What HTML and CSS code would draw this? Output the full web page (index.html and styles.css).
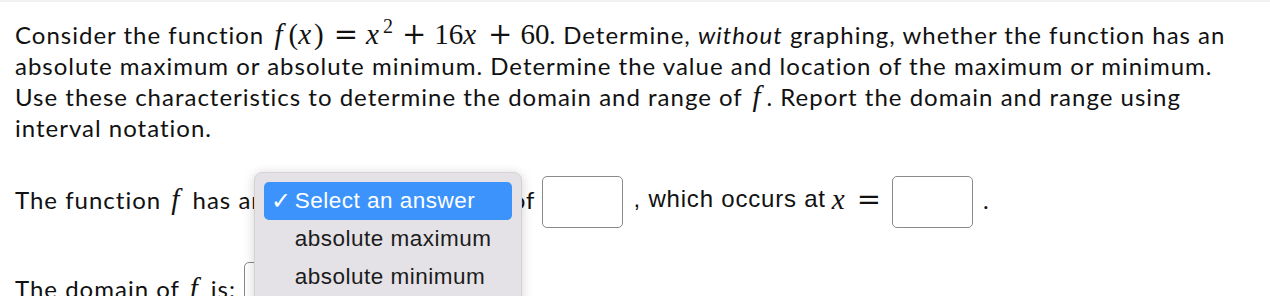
FILE: index.html
```html
<!DOCTYPE html>
<html lang="en">
<head>
    <meta charset="UTF-8">
    <title>Question</title>
    <link rel="stylesheet" href="styles.css">
</head>
<body>
    <div class="question">
        <div class="text">
            Consider the function <span class="math"><i class="mi f">f</i><span class="paren">(</span><i class="mi x">x</i><span class="paren">)</span><span class="rel">=</span><i class="mi x">x</i><sup>2</sup><span class="bin">+</span>16<i class="mi x">x</i><span class="bin">+</span>60</span>. Determine, <em>without</em> graphing, whether the function has an<br>
            absolute maximum or absolute minimum. Determine the value and location of the maximum or minimum.<br>
            Use these characteristics to determine the domain and range of <span class="math"><i class="mi f">f</i></span>. Report the domain and range using<br>
            interval notation.
        </div>

        <div class="answer">
            <span class="label">The function <span class="math"><i class="mi f">f</i></span> has an</span>
            <span class="select-wrap">
                <span class="menu">
                    <span class="option selected"><span class="check">✓</span>Select an answer</span>
                    <span class="option">absolute maximum</span>
                    <span class="option">absolute minimum</span>
                </span>
            </span>
            <span class="label">of</span>
            <span class="box"></span>
            <span class="label sys">, which occurs at</span>
            <span class="label math"><i class="mi x">x</i><span class="rel">=</span></span>
            <span class="box"></span>
            <span class="label dot">.</span>
        </div>

        <div class="answer domain">
            <span class="label">The domain of <span class="math"><i class="mi f">f</i></span> is:</span>
            <span class="box"></span>
        </div>
    </div>
</body>
</html>
```

FILE: styles.css
```css
html, body {
    margin: 0;
    padding: 0;
    background-color: #fff;
    overflow: hidden;
}

body {
    border-top: 2px solid #f2f2f2;
    height: 294px;
}

.question {
    padding: 17px 15px 0 15px;
    font-family: Lato, sans-serif;
    font-size: 24px;
    letter-spacing: 1px;
    color: #111;
}

.text {
    line-height: 31px;
    white-space: nowrap;
}

/* math, set a bit larger like the rendered TeX */
.math {
    font-family: "Liberation Serif", serif;
    font-size: 29px;
    letter-spacing: 0;
    line-height: 1;
}

.mi.f {
    margin: 0 6px 0 3px;
}

.mi.x {
    margin-right: 3px;
}

.rel,
.bin {
    font-family: "DejaVu Serif", serif;
    font-weight: 300;
}

.rel {
    margin: 0 8px 0 10px;
}

.bin {
    margin: 0 8px 0 9px;
}

.math sup {
    font-size: 20px;
    line-height: 0;
    margin-left: 1px;
}

.answer {
    margin-top: 32px;
    height: 54px;
    white-space: nowrap;
    display: flex;
    align-items: center;
    gap: 6px;
}

.answer .label {
    margin-bottom: 6px;
}

.answer .rel {
    margin-left: 9px;
    margin-right: 5px;
}

.domain {
    margin-top: 32px;
    gap: 8px;
}

.domain .label {
    margin-bottom: 0;
}

.select-wrap {
    position: relative;
    display: inline-block;
    width: 234px;
    height: 40px;
}

.box {
    display: inline-block;
    width: 79px;
    height: 50px;
    border: 1px solid #8a8a8a;
    border-radius: 5px;
    background-color: #fff;
}

.sys {
    font-family: "Liberation Sans", sans-serif;
    font-size: 24px;
    letter-spacing: 0.8px;
    margin-left: 5px;
}

.dot {
    margin-left: 4px;
}

.menu {
    position: absolute;
    left: -18px;
    top: -10px;
    width: 248px;
    height: 140px;
    padding: 9px;
    background-color: #e4e2e7;
    border: 1px solid #d4d2d6;
    border-radius: 8px;
    box-shadow: 0 2px 12px rgba(0, 0, 0, 0.18);
    font-family: "Liberation Sans", sans-serif;
    font-size: 22.5px;
    letter-spacing: 0.5px;
    line-height: 38px;
    color: #1c1c1c;
    z-index: 2;
}

.option {
    display: block;
    padding-left: 31px;
    height: 38px;
}

.selected {
    position: relative;
    background-color: #3b93fb;
    color: #fff;
    border-radius: 5px;
}

.check {
    position: absolute;
    left: 7px;
    font-size: 24px;
}
```
